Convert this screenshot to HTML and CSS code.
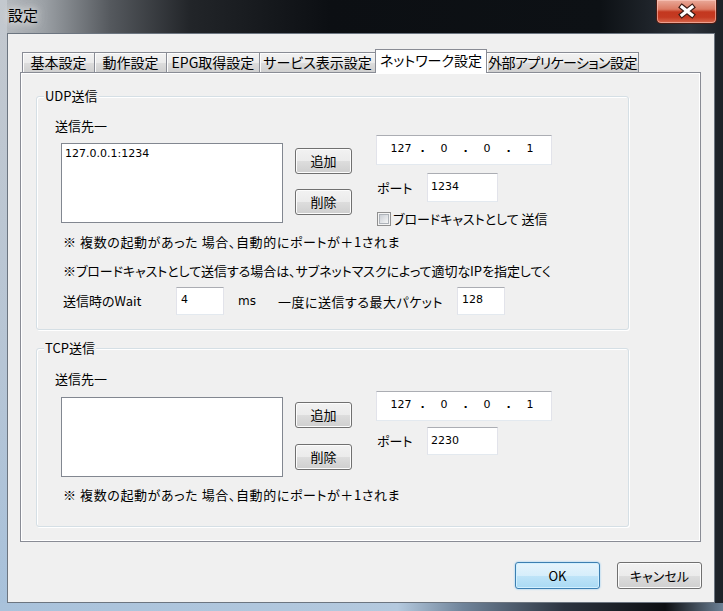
FILE: index.html
```html
<!DOCTYPE html>
<html lang="ja">
<head>
<meta charset="utf-8">
<title>設定</title>
<link rel="stylesheet" href="styles.css">
</head>
<body>
<div class="window">
  <div class="titlebar">
    <span class="title">設定</span>
    <div class="close">
      <svg width="61" height="24" viewBox="0 0 61 24">
        <g stroke-linecap="square">
          <path d="M26 7 L36 15 M36 7 L26 15" stroke="#3a1a14" stroke-width="5.5"/>
          <path d="M26 7 L36 15 M36 7 L26 15" stroke="#ffffff" stroke-width="3.2"/>
        </g>
      </svg>
    </div>
  </div>
  <div class="client">
    <div class="tabs">
      <div class="tab t1">基本設定</div>
      <div class="tab t2">動作設定</div>
      <div class="tab t3">EPG取得設定</div>
      <div class="tab t4">サービス表示設定</div>
      <div class="tab t5 selected">ネットワーク設定</div>
      <div class="tab t6">外部アプリケーション設定</div>
    </div>
    <div class="panel">
      <div class="group udp">
        <span class="legend">UDP送信</span>
        <div class="toprow">
          <div class="leftcol">
            <div class="label">送信先一</div>
            <div class="listbox"><div class="item">127.0.0.1:1234</div></div>
          </div>
          <div class="btncol">
            <div class="btn b1">追加</div>
            <div class="btn b2">削除</div>
          </div>
          <div class="rightcol">
            <div class="ipbox">
              <span class="seg">127</span><span class="dot">.</span><span class="seg">0</span><span class="dot">.</span><span class="seg">0</span><span class="dot">.</span><span class="seg">1</span>
            </div>
            <div class="portrow">
              <span class="portlabel">ポート</span>
              <div class="textbox port">1234</div>
            </div>
            <div class="checkrow">
              <span class="check"><span class="checkin"></span></span>
              <span class="checklabel">ブロードキャストとして 送信</span>
            </div>
          </div>
        </div>
        <div class="note n1">※ 複数の起動があった 場合、自動的にポートが＋1されま</div>
        <div class="note n2">※ブロードキャストとして送信する場合は、サブネットマスクによって適切なIPを指定してく</div>
        <div class="waitrow">
          <span class="waitlabel">送信時のWait</span>
          <div class="textbox small">4</div>
          <span class="ms">ms</span>
          <span class="pktlabel">一度に送信する最大パケット</span>
          <div class="textbox small">128</div>
        </div>
      </div>
      <div class="group tcp">
        <span class="legend">TCP送信</span>
        <div class="toprow">
          <div class="leftcol">
            <div class="label">送信先一</div>
            <div class="listbox"></div>
          </div>
          <div class="btncol">
            <div class="btn b1">追加</div>
            <div class="btn b2">削除</div>
          </div>
          <div class="rightcol">
            <div class="ipbox">
              <span class="seg">127</span><span class="dot">.</span><span class="seg">0</span><span class="dot">.</span><span class="seg">0</span><span class="dot">.</span><span class="seg">1</span>
            </div>
            <div class="portrow">
              <span class="portlabel">ポート</span>
              <div class="textbox port">2230</div>
            </div>
          </div>
        </div>
        <div class="note n1">※ 複数の起動があった 場合、自動的にポートが＋1されま</div>
      </div>
    </div>
    <div class="footer">
      <div class="btn big ok">OK</div>
      <div class="btn big">キャンセル</div>
    </div>
  </div>
</div>
</body>
</html>
```

FILE: styles.css
```css
* { box-sizing: border-box; }
html, body { margin: 0; padding: 0; }
body {
  width: 723px;
  height: 611px;
  overflow: hidden;
  font-family: "Noto Sans CJK JP", sans-serif;
  font-feature-settings: "palt";
  font-size: 13px;
  color: #000;
}
.window {
  width: 723px;
  height: 611px;
  display: flex;
  flex-direction: column;
  background:
    linear-gradient(to right, #a9c2db 0, #b4c9de 55%, #70849a 64%, #2c3440 78%, #0d0f12 92%, #6d8196 100%) left bottom / 100% 8px no-repeat,
    linear-gradient(#c3c8ce 0, #b6c5d5 60%, #a7c1db 100%) left top / 7px 100% no-repeat,
    linear-gradient(to right, #b7bcc1 0, #9a9fa4 45px, #55595e 110px, #222529 190px, #0c0f13 330px, #0d1115 600px, #2c323a 690px, #1c2127 723px);
}
.titlebar {
  height: 33px;
  display: flex;
  align-items: flex-start;
  flex: none;
}
.title {
  margin: 6px 0 0 8px;
  font-size: 15px;
  line-height: 18px;
  font-feature-settings: normal;
  color: #000;
  text-shadow: 0 0 6px #e8e8e8, 0 0 10px #d8d8d8, 0 0 14px #cfcfcf;
}
.close {
  margin-left: auto;
  margin-right: 6px;
  width: 61px;
  height: 24px;
  border: 1px solid #4a1c14;
  border-top: none;
  border-radius: 0 0 5px 5px;
  background: linear-gradient(#e9a999 0, #db7a63 40%, #c3371f 52%, #c43a22 75%, #d9694e 100%);
  box-shadow: inset 0 0 0 1px rgba(255, 210, 200, 0.55);
  position: relative;
}
.close svg { position: absolute; left: -1px; top: 0; }
.client {
  margin: 0 8px 0 7px;
  height: 570px;
  flex: none;
  border: 1px solid #6c7580;
  background: #f0f0f0;
}
.tabs {
  display: flex;
  align-items: flex-end;
  height: 23px;
  margin: 15px 0 0 14px;
}
.tab {
  height: 20px;
  border: 1px solid #898c95;
  border-bottom: none;
  background: linear-gradient(#f2f2f2 0, #ebebeb 50%, #dddddd 51%, #cfcfcf 100%);
  box-shadow: inset 1px 1px 0 #fcfcfc;
  font-size: 14px;
  line-height: 18px;
  text-align: center;
  white-space: nowrap;
  margin-right: -1px;
  overflow: hidden;
}
.t1 { width: 73px; }
.t2 { width: 73px; }
.t3 { width: 94px; }
.t4 { width: 117px; }
.t5 { width: 112px; }
.t6 { width: 153px; letter-spacing: -0.6px; }
.tab.selected {
  height: 24px;
  margin-bottom: -1px;
  background: #ffffff;
  box-shadow: none;
  line-height: 21px;
  position: relative;
  z-index: 1;
}
.panel {
  margin-left: 12px;
  width: 681px;
  height: 470px;
  border: 1px solid #898c95;
  box-shadow: inset 0 0 0 1px #ffffff;
  background: #f0f0f0;
  overflow: hidden;
}
.group {
  position: relative;
  margin-left: 15px;
  width: 593px;
  border: 1px solid #d5dfe5;
  border-radius: 3px;
  box-shadow: inset 1px 1px 0 #ffffff, 1px 1px 0 #ffffff;
  padding-left: 18px;
}
.udp { margin-top: 23px; height: 234px; padding-top: 21px; }
.tcp { margin-top: 18px; height: 179px; padding-top: 22px; }
.legend {
  position: absolute;
  top: -9px;
  left: 7px;
  padding: 0 1px;
  line-height: 16px;
  background: #f0f0f0;
}
.toprow { display: flex; align-items: flex-start; }
.label { line-height: 16px; }
.listbox {
  margin: 9px 0 0 6px;
  width: 222px;
  height: 80px;
  border: 1px solid #828790;
  background: #ffffff;
  padding: 3px 0 0 3px;
}
.tcp .listbox { margin-top: 10px; }
.item {
  font-family: "DejaVu Sans", sans-serif;
  font-size: 11px;
  line-height: 14px;
}
.btncol { margin: 30px 0 0 12px; display: flex; flex-direction: column; }
.tcp .btncol { margin-top: 31px; }
.btn {
  width: 57px;
  height: 26px;
  border: 1px solid #707070;
  border-radius: 3px;
  background: linear-gradient(#f2f2f2 0, #ebebeb 50%, #dddddd 51%, #cfcfcf 100%);
  box-shadow: inset 0 0 0 1px #fcfcfc;
  text-align: center;
  line-height: 24px;
  font-size: 13px;
}
.btncol .b2 { margin-top: 15px; }
.tcp .btncol .b2 { margin-top: 16px; }
.rightcol { margin: 17px 0 0 24px; }
.tcp .rightcol { margin-top: 20px; }
.ipbox {
  width: 176px;
  height: 30px;
  background: #ffffff;
  border: 1px solid #e2e3ea;
  border-top-color: #abadb3;
  border-bottom-color: #e3e9ef;
  display: flex;
  align-items: center;
  padding: 0 0 3px 9px;
  font-family: "DejaVu Sans", sans-serif;
  font-size: 11px;
}
.seg { width: 30px; text-align: center; }
.dot { width: 13px; text-align: center; font-weight: bold; }
.portrow { display: flex; align-items: center; margin-top: 8px; }
.tcp .portrow { margin-top: 6px; }
.portlabel { width: 51px; padding-left: 1px; line-height: 16px; }
.textbox {
  background: #ffffff;
  border: 1px solid #e2e3ea;
  border-top-color: #abadb3;
  border-bottom-color: #e3e9ef;
  font-family: "DejaVu Sans", sans-serif;
  font-size: 11px;
  line-height: 14px;
  padding: 6px 0 0 3px;
}
.port { width: 71px; height: 29px; }
.tcp .port { height: 28px; }
.checkrow { display: flex; align-items: center; margin-top: 9px; height: 16px; }
.check {
  width: 14px;
  height: 14px;
  border: 1px solid #8f8f8f;
  background: #f4f4f4;
  display: flex;
  align-items: center;
  justify-content: center;
  margin-left: 1px;
}
.checkin {
  width: 10px;
  height: 10px;
  border: 1px solid #aeb3b9;
  background: linear-gradient(135deg, #cbcfd5 0, #e4e6e9 60%, #f6f6f6 100%);
}
.checklabel { margin-left: 2px; line-height: 16px; letter-spacing: 0; }
.note {
  line-height: 16px;
  margin-left: 8px;
  white-space: nowrap;
  letter-spacing: 0.6px;
}
.udp .n1 { margin-top: 7px; }
.n2 { margin-top: 13px; letter-spacing: -0.05px; }
.tcp .n1 { margin-top: 10px; }
.waitrow { display: flex; align-items: center; margin: 8px 0 0 8px; }
.waitlabel { width: 113px; line-height: 16px; }
.small { width: 48px; height: 28px; padding-left: 4px; padding-top: 5px; }
.ms { margin-left: 14px; font-family: "DejaVu Sans", sans-serif; font-size: 12px; }
.pktlabel { margin-left: 22px; width: 179px; letter-spacing: 0.5px; }
.footer {
  display: flex;
  justify-content: flex-end;
  gap: 17px;
  margin-top: 20px;
  padding-right: 12px;
}
.btn.big { width: 85px; height: 27px; line-height: 25px; }
.btn.ok {
  border-color: #3c7fb1;
  background: linear-gradient(#e6f4fc 0, #d6eefb 50%, #bfe4f8 51%, #a9daf4 100%);
  box-shadow: inset 0 0 0 1px #d2f0ff, 0 0 2px #7cc4f5;
}
```
